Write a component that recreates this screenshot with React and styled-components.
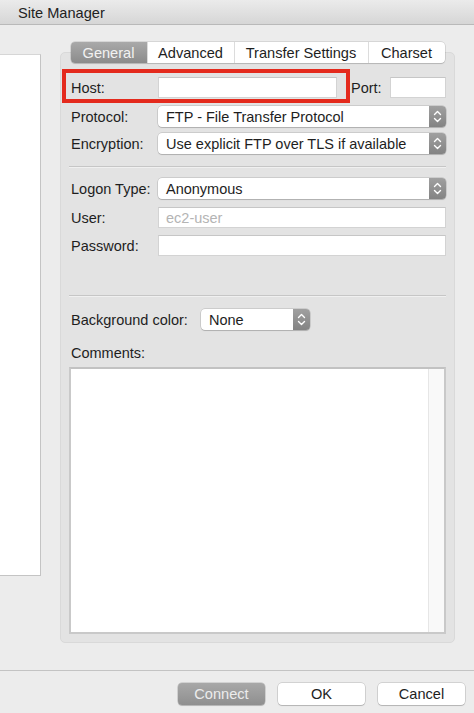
import styled, { createGlobalStyle } from 'styled-components'

const GlobalStyle = createGlobalStyle`
  html, body {
    margin: 0;
    padding: 0;
    background: #ececec;
  }
  body {
    font-family: "Liberation Sans", Arial, sans-serif;
    font-size: 14.5px;
    color: #1e1e1e;
  }
`

const Window = styled.div`
  width: 474px;
  height: 713px;
  display: flex;
  flex-direction: column;
  background: #ececec;
  overflow: hidden;
`

const TitleBar = styled.div`
  height: 25px;
  box-sizing: border-box;
  display: flex;
  align-items: center;
  padding: 2px 0 0 18px;
  background: linear-gradient(#ebebeb, #d6d6d6);
  border-bottom: 1px solid #b9b9b9;
  font-size: 14.6px;
  color: #222;
`

const Body = styled.div`
  height: 645px;
  display: flex;
  align-items: flex-start;
`

const SiteList = styled.div`
  width: 40px;
  height: 520px;
  margin-top: 29px;
  background: #fff;
  border-right: 1px solid #c4c4c4;
  border-bottom: 1px solid #c4c4c4;
  border-top: 1px solid #d6d6d6;
`

const Settings = styled.div`
  width: 395px;
  margin-left: 19px;
  margin-top: 17px;
  display: flex;
  flex-direction: column;
  align-items: center;
`

const Tabs = styled.div`
  position: relative;
  z-index: 1;
  display: flex;
  height: 21px;
  background: #fff;
  border-radius: 4px;
  box-shadow: 0 0 0 0.5px rgba(0, 0, 0, 0.18), 0 1px 1px rgba(0, 0, 0, 0.12);
  overflow: hidden;
`

const Tab = styled.div`
  width: ${p => p.$w}px;
  display: flex;
  align-items: center;
  justify-content: center;
  font-size: 14.6px;
  color: ${p => (p.$active ? '#f2f2f2' : '#1e1e1e')};
  background: ${p => (p.$active ? 'linear-gradient(#a9a9a9, #8b8b8b)' : 'transparent')};
  border-left: ${p => (p.$first ? 'none' : '1px solid #dcdcdc')};
  box-sizing: border-box;
`

const GroupBox = styled.div`
  align-self: stretch;
  margin-top: -11px;
  box-sizing: border-box;
  height: 591px;
  padding: 24px 8px 8px 10px;
  background: #e3e3e3;
  border: 1px solid #d9d9d9;
  border-radius: 5px;
  display: flex;
  flex-direction: column;
`

const Row = styled.div`
  display: flex;
  align-items: center;
  height: 21px;
  margin-top: ${p => p.$mt || 0}px;
`

const Label = styled.span`
  width: ${p => p.$w || 87}px;
  flex: none;
  white-space: nowrap;
  color: #1e1e1e;
`

/* red annotation frame drawn round the Host field */
const Highlight = styled.div`
  display: flex;
  align-items: center;
  border: 4px solid #e42a1d;
  padding: 4px 9px 1px 5px;
  margin: -8px 1px -5px -9px;
`

const TextInput = styled.div`
  box-sizing: border-box;
  height: 21px;
  width: ${p => (p.$w ? `${p.$w}px` : 'auto')};
  flex: ${p => (p.$w ? 'none' : '1')};
  background: #fff;
  border: 1px solid #d3d3d3;
  border-top-color: #c6c6c6;
  padding-left: 7px;
  display: flex;
  align-items: center;
  color: #b4b4b4;
`

const Select = styled.div`
  box-sizing: border-box;
  height: 21px;
  width: ${p => (p.$w ? `${p.$w}px` : 'auto')};
  flex: ${p => (p.$w ? 'none' : '1')};
  background: #fff;
  border-radius: 4px;
  box-shadow: 0 0 0 0.5px rgba(0, 0, 0, 0.2), 0 1px 1px rgba(0, 0, 0, 0.14);
  display: flex;
  align-items: center;
  justify-content: space-between;
  padding-left: 8px;
  overflow: hidden;
`

const Stepper = styled.div`
  width: 17px;
  height: 21px;
  flex: none;
  background: linear-gradient(#a0a0a0, #838383);
  display: flex;
  align-items: center;
  justify-content: center;
`

const Separator = styled.div`
  height: 1px;
  background: #c6c6c6;
  border-bottom: 1px solid #f0f0f0;
  margin-top: ${p => p.$mt}px;
  margin-left: -2px;
`

const CommentsLabel = styled.div`
  height: 18px;
  line-height: 18px;
  margin-top: 14px;
`

const Comments = styled.div`
  margin-top: 5px;
  margin-left: -2px;
  height: 267px;
  box-sizing: border-box;
  background: #fff;
  border: 2px solid #c9c9c9;
  border-top-color: #c2c2c2;
  display: flex;
  justify-content: flex-end;
`

const ScrollTrack = styled.div`
  width: 15px;
  background: #f9f9f9;
  border-left: 1px solid #e6e6e6;
`

const Footer = styled.div`
  border-top: 1px solid #c3c3c3;
  display: flex;
  justify-content: flex-end;
  gap: 13px;
  padding: 12px 9px 0 0;
`

const Button = styled.div`
  width: 87px;
  height: 22px;
  box-sizing: border-box;
  border-radius: 4px;
  display: flex;
  align-items: center;
  justify-content: center;
  font-size: 14.6px;
  color: ${p => (p.$disabled ? '#ececec' : '#1e1e1e')};
  background: ${p => (p.$disabled ? 'linear-gradient(#a8a8a8, #8f8f8f)' : '#fff')};
  box-shadow: 0 0 0 0.5px rgba(0, 0, 0, 0.22), 0 1px 1px rgba(0, 0, 0, 0.14);
`

const Chevrons = () => (
  <svg width='17' height='21' viewBox='0 0 17 21' fill='none'>
    <path d='M5.5 8.5 L8.5 5.5 L11.5 8.5' stroke='#fff' strokeWidth='1.4' strokeLinecap='round' strokeLinejoin='round' />
    <path d='M5.5 12.5 L8.5 15.5 L11.5 12.5' stroke='#fff' strokeWidth='1.4' strokeLinecap='round' strokeLinejoin='round' />
  </svg>
)

const Dropdown = ({ value, w }) => (
  <Select $w={w}>
    <span>{value}</span>
    <Stepper><Chevrons /></Stepper>
  </Select>
)

const tabs = [
  { name: 'General', w: 76, active: true },
  { name: 'Advanced', w: 87 },
  { name: 'Transfer Settings', w: 134 },
  { name: 'Charset', w: 77 }
]

export default function App () {
  return (
    <>
      <GlobalStyle />
      <Window>
        <TitleBar>Site Manager</TitleBar>
        <Body>
          <SiteList />
          <Settings>
            <Tabs>
              {tabs.map((t, i) => (
                <Tab key={t.name} $w={t.w} $active={t.active} $first={i === 0}>{t.name}</Tab>
              ))}
            </Tabs>
            <GroupBox>
              <Row>
                <Highlight>
                  <Label>Host:</Label>
                  <TextInput $w={179} />
                </Highlight>
                <Label $w={39}>Port:</Label>
                <TextInput />
              </Row>
              <Row $mt={8}>
                <Label>Protocol:</Label>
                <Dropdown value='FTP - File Transfer Protocol' />
              </Row>
              <Row $mt={6}>
                <Label>Encryption:</Label>
                <Dropdown value='Use explicit FTP over TLS if available' />
              </Row>
              <Separator $mt={12} />
              <Row $mt={10}>
                <Label>Logon Type:</Label>
                <Dropdown value='Anonymous' />
              </Row>
              <Row $mt={8}>
                <Label>User:</Label>
                <TextInput>ec2-user</TextInput>
              </Row>
              <Row $mt={7}>
                <Label>Password:</Label>
                <TextInput />
              </Row>
              <Separator $mt={39} />
              <Row $mt={12}>
                <Label $w={130}>Background color:</Label>
                <Dropdown value='None' w={109} />
              </Row>
              <CommentsLabel>Comments:</CommentsLabel>
              <Comments>
                <ScrollTrack />
              </Comments>
            </GroupBox>
          </Settings>
        </Body>
        <Footer>
          <Button $disabled>Connect</Button>
          <Button>OK</Button>
          <Button>Cancel</Button>
        </Footer>
      </Window>
    </>
  )
}
